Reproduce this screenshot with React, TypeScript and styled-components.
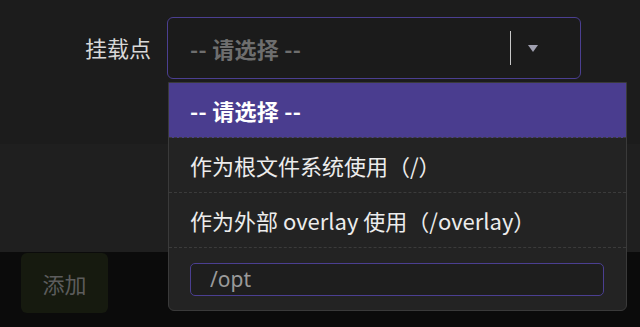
import styled, { createGlobalStyle } from "styled-components";

const GlobalStyle = createGlobalStyle`
  html, body {
    margin: 0;
    padding: 0;
    background: #0b0b0b;
  }
  body {
    font-family: "Noto Sans CJK SC", "Noto Sans", sans-serif;
    color: #e6e6e6;
  }
`;

const Page = styled.div`
  width: 640px;
  height: 327px;
  display: flex;
  flex-direction: column;
  overflow: hidden;
`;

const Section = styled.div`
  background: #1c1c1c;
  height: 144px;
  box-sizing: border-box;
  padding-top: 17px;
`;

const SubSection = styled.div`
  background: #1f1f1f;
  height: 108px;
`;

const Row = styled.div`
  display: flex;
  align-items: center;
  gap: 16px;
`;

const Label = styled.label`
  width: 151px;
  text-align: right;
  font-size: 22px;
  color: #d8d8d8;
  margin-top: -2px;
`;

const SelectWrap = styled.div`
  position: relative;
`;

const SelectBox = styled.div`
  width: 414px;
  height: 62px;
  box-sizing: border-box;
  border: 1.5px solid #4b3f91;
  border-radius: 6px;
  background: #1b1b1b;
  display: flex;
  align-items: center;
  padding-left: 22px;
`;

const Placeholder = styled.span`
  flex: 1;
  font-size: 22px;
  font-weight: 700;
  letter-spacing: 0.3px;
  color: #6e6e6e;
`;

const Divider = styled.span`
  width: 1.5px;
  height: 34px;
  background: #c8c8c8;
`;

const Caret = styled.span`
  width: 0;
  height: 0;
  margin: 0 42px 0 17px;
  border-left: 5px solid transparent;
  border-right: 5px solid transparent;
  border-top: 7px solid #a0a0b0;
`;

const Menu = styled.div`
  position: absolute;
  top: 65px;
  left: 1px;
  width: 459px;
  height: 229px;
  box-sizing: border-box;
  background: #232323;
  border: 1px solid #3a3a3a;
  border-radius: 0 0 6px 6px;
  overflow: hidden;
  display: flex;
  flex-direction: column;
  z-index: 2;
`;

const Option = styled.div<{ $active?: boolean }>`
  height: 55px;
  flex-shrink: 0;
  box-sizing: border-box;
  display: flex;
  align-items: center;
  padding-left: 21px;
  font-size: 22px;
  font-weight: ${(p) => (p.$active ? 700 : 400)};
  letter-spacing: ${(p) => (p.$active ? "0.3px" : "0")};
  color: ${(p) => (p.$active ? "#ffffff" : "#ececec")};
  background: ${(p) => (p.$active ? "#4a3d8f" : "transparent")};
  border-bottom: 1px dashed #3b3b3b;
`;

const InputRow = styled.div`
  flex: 1;
  display: flex;
  align-items: center;
  padding: 0 22px 0 21px;
`;

const CustomInput = styled.input`
  width: 100%;
  height: 33px;
  box-sizing: border-box;
  border: 1.5px solid #4b3f91;
  border-radius: 5px;
  background: #1e1e1e;
  color: #9a9a9a;
  font-family: "Noto Sans", sans-serif;
  font-size: 21px;
  padding: 0 19px;
  outline: none;
`;

const Footer = styled.div`
  flex: 1;
  background: #0b0b0b;
  padding: 1px 0 0 21px;
`;

const AddButton = styled.button`
  width: 87px;
  height: 60px;
  border: none;
  border-radius: 6px;
  background: #161a0f;
  color: #5c5c5c;
  font-family: inherit;
  font-size: 22px;
`;

export default function App() {
  return (
    <Page>
      <GlobalStyle />
      <Section>
        <Row>
          <Label>挂载点</Label>
          <SelectWrap>
            <SelectBox>
              <Placeholder>-- 请选择 --</Placeholder>
              <Divider />
              <Caret />
            </SelectBox>
            <Menu>
              <Option $active>-- 请选择 --</Option>
              <Option>作为根文件系统使用（/）</Option>
              <Option>作为外部 overlay 使用（/overlay）</Option>
              <InputRow>
                <CustomInput defaultValue="/opt" />
              </InputRow>
            </Menu>
          </SelectWrap>
        </Row>
      </Section>
      <SubSection />
      <Footer>
        <AddButton>添加</AddButton>
      </Footer>
    </Page>
  );
}
